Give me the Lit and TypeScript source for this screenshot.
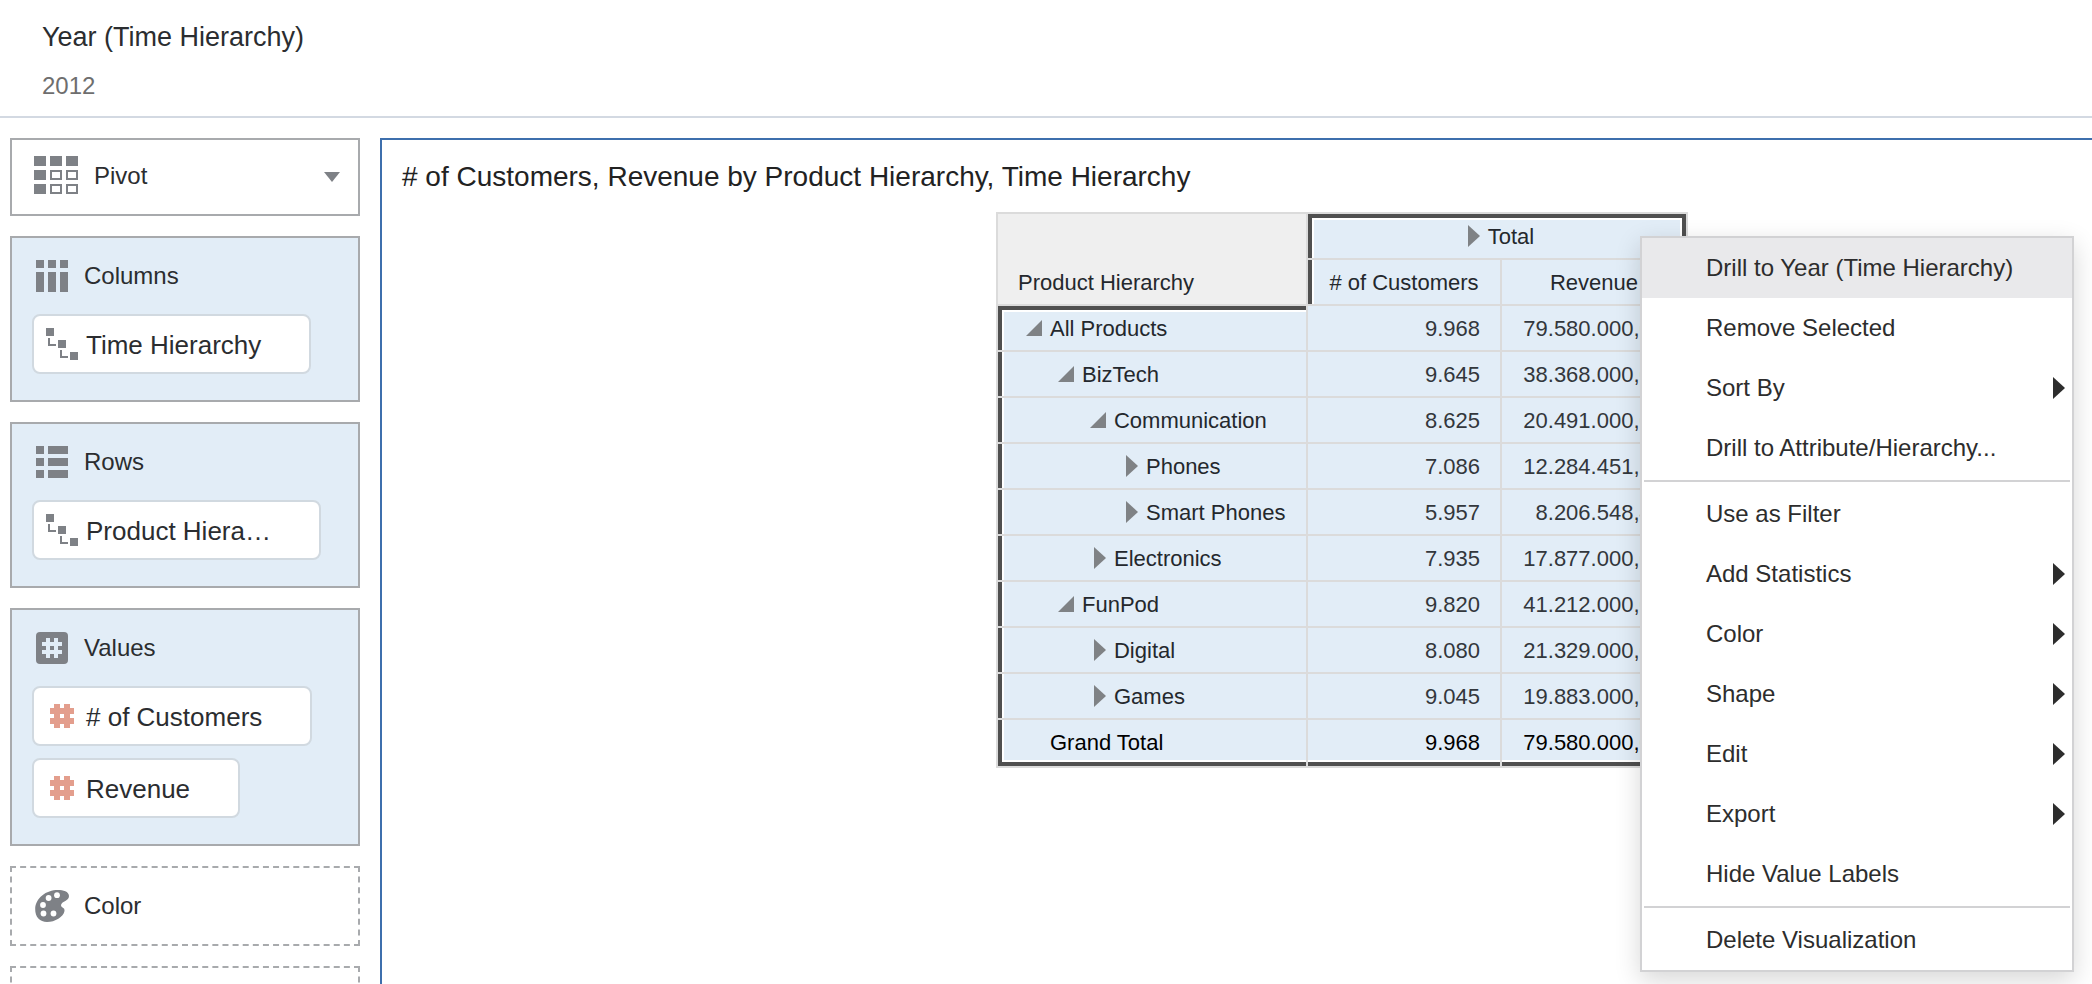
import { LitElement, html, css, svg, nothing } from "lit";
import { customElement, property, state } from "lit/decorators.js";
import { classMap } from "lit/directives/class-map.js";

type IconName = "pivot" | "columns" | "rows" | "values" | "color" | "hierarchy" | "measure";

const icons: Record<IconName, unknown> = {
  pivot: svg`<g fill="currentColor"><path d="M0 0h12v10H0zM16 0h12v10H16zM32 0h12v10H32zM0 14h12v10H0zM0 28h12v10H0z"/></g>
    <g fill="none" stroke="currentColor" stroke-width="2"><path d="M17 15h10v8H17zM33 15h10v8H33zM17 29h10v8H17zM33 29h10v8H33z"/></g>`,
  columns: svg`<path fill="currentColor" d="M0 0h8v8H0zM12 0h8v8h-8zM24 0h8v8h-8zM0 12h8v20H0zM12 12h8v20h-8zM24 12h8v20h-8z"/>`,
  rows: svg`<path fill="currentColor" d="M0 0h8v8H0zM0 12h8v8H0zM0 24h8v8H0zM12 0h20v8H12zM12 12h20v8H12zM12 24h20v8H12z"/>`,
  values: svg`<rect width="32" height="32" rx="4" fill="currentColor"/>
    <path fill="#e2edf7" fill-rule="evenodd" d="M10 6h4v4h4V6h4v4h4v4h-4v4h4v4h-4v4h-4v-4h-4v4h-4v-4H6v-4h4v-4H6v-4h4zM14 14v4h4v-4z"/>`,
  color: svg`<path fill="currentColor" d="M22 0C27 0 33 1.500 33 6C33 11 26 11 25 15C25 18 29 17 28.500 21C27.500 27 19 32 11 32C4 32-1 27-.800 19C-.500 8 10 0 22 0z"/>
    <g fill="#fff"><circle cx="21" cy="5.200" r="2.900"/><circle cx="12.600" cy="8" r="2.900"/><circle cx="7" cy="15" r="2.900"/><circle cx="7.500" cy="23.500" r="2.900"/><circle cx="17.500" cy="23.500" r="2.900"/></g>`,
  hierarchy: svg`<path fill="currentColor" d="M0 0h8v8H0zM12 12h8v8h-8zM24 24h8v8h-8zM2 10h2v6h6v2H2zM14 22h2v6h6v2h-8z"/>`,
  measure: svg`<path fill="#e39e8d" fill-rule="evenodd" d="M8 4h6v4h4V4h6v4h4v6h-4v4h4v6h-4v4h-6v-4h-4v4H8v-4H4v-6h4v-4H4V8h4zM14 14v4h4v-4z"/>`,
};

const icon = (name: IconName) => {
  const [w, h] = name === "pivot" ? [44, 38] : [32, 32];
  return html`<svg class="icon" width=${w} height=${h} viewBox="0 0 ${w} ${h}" aria-hidden="true">${icons[name]}</svg>`;
};

const collapsed = html`<svg class="toggle" width="16" height="22" viewBox="0 0 16 22" aria-hidden="true"><path fill="currentColor" d="M4 0L16 11L4 22z"/></svg>`;
const expanded = html`<svg class="toggle" width="16" height="22" viewBox="0 0 16 22" aria-hidden="true"><path fill="currentColor" d="M16 3V19H0z"/></svg>`;

interface Field {
  label: string;
  icon: IconName;
}

@customElement("drop-target")
class DropTarget extends LitElement {
  @property() label = "";
  @property() icon: IconName = "columns";
  @property({ attribute: false }) fields: Field[] = [];

  static styles = css`
    :host {
      display: block;
    }
    .panel {
      padding: 22px 20px;
      border: 2px dashed #a8aaad;
    }
    .filled {
      padding-bottom: 26px;
      border-style: solid;
      background: #e2edf7;
    }
    .heading {
      display: flex;
      align-items: center;
      gap: 16px;
      height: 32px;
      margin: 0;
      padding-left: 4px;
      font-size: 24px;
      font-weight: 400;
    }
    .icon {
      flex: none;
      overflow: visible;
      color: #7e8186;
    }
    .chips {
      display: flex;
      flex-direction: column;
      align-items: flex-start;
      gap: 12px;
      margin: 22px 0 0;
      padding: 0;
      list-style: none;
    }
    .chip {
      display: flex;
      align-items: center;
      gap: 8px;
      height: 60px;
      padding: 0 48px 0 12px;
      border: 2px solid #d1d9e0;
      border-radius: 8px;
      background: #fff;
      color: inherit;
      font: inherit;
      font-size: 26px;
      white-space: nowrap;
    }
    .chip-label {
      padding-top: 2px;
    }
  `;

  render() {
    const filled = this.fields.length > 0;
    return html`
      <section class=${classMap({ panel: true, filled })}>
        <h2 class="heading">${icon(this.icon)}<span>${this.label}</span></h2>
        ${filled
          ? html`<ul class="chips">
              ${this.fields.map(
                (f) =>
                  html`<li><button class="chip" type="button">${icon(f.icon)}<span class="chip-label">${f.label}</span></button></li>`
              )}
            </ul>`
          : nothing}
      </section>
    `;
  }
}

interface Row {
  label: string;
  level: number;
  state: "open" | "closed" | "total";
  customers: string;
  revenue: string;
}

const rows: Row[] = [
  { label: "All Products", level: 0, state: "open", customers: "9.968", revenue: "79.580.000,00" },
  { label: "BizTech", level: 1, state: "open", customers: "9.645", revenue: "38.368.000,00" },
  { label: "Communication", level: 2, state: "open", customers: "8.625", revenue: "20.491.000,00" },
  { label: "Phones", level: 3, state: "closed", customers: "7.086", revenue: "12.284.451,52" },
  { label: "Smart Phones", level: 3, state: "closed", customers: "5.957", revenue: "8.206.548,48" },
  { label: "Electronics", level: 2, state: "closed", customers: "7.935", revenue: "17.877.000,00" },
  { label: "FunPod", level: 1, state: "open", customers: "9.820", revenue: "41.212.000,00" },
  { label: "Digital", level: 2, state: "closed", customers: "8.080", revenue: "21.329.000,00" },
  { label: "Games", level: 2, state: "closed", customers: "9.045", revenue: "19.883.000,00" },
  { label: "Grand Total", level: 0, state: "total", customers: "9.968", revenue: "79.580.000,00" },
];

@customElement("pivot-table")
class PivotTable extends LitElement {
  static styles = css`
    :host {
      display: block;
    }
    .table {
      table-layout: fixed;
      width: 692px;
      border-spacing: 2px;
      background: #dbdbdb;
      font-size: 22px;
      line-height: 42px;
      color: #24282d;
      --dark: #4f4f4f;
    }
    .product {
      width: 308px;
    }
    .customers {
      width: 192px;
    }
    .revenue {
      width: 184px;
    }
    .table th,
    .table td {
      height: 42px;
      padding: 2px 20px 0;
      background: #e2edf7;
      font-weight: 400;
      white-space: nowrap;
    }
    .table th.corner {
      background: #efefef;
      text-align: left;
      vertical-align: bottom;
    }
    .table th.tree {
      height: 44px;
      padding-top: 0;
    }
    .group {
      box-shadow: inset 4px 4px var(--dark), inset -4px 0 var(--dark), inset 6px 6px #fff, inset -6px 0 #fff;
    }
    .first {
      box-shadow: inset 4px 0 var(--dark), inset 6px 0 #fff;
    }
    .last {
      box-shadow: inset -4px 0 var(--dark), inset -6px 0 #fff;
    }
    .member {
      display: flex;
      align-items: center;
      gap: 8px;
      height: 44px;
      padding-left: calc(8px + var(--level) * 32px);
    }
    .name {
      padding-top: 2px;
    }
    .center {
      justify-content: center;
      padding-left: 4px;
    }
    .toggle {
      flex: none;
      color: #7f8285;
    }
    .spacer {
      width: 16px;
    }
    .number {
      color: #33373c;
      text-align: right;
    }
    .table td.last {
      padding-right: 22px;
    }
    tbody tr:first-child .first {
      box-shadow: inset 4px 4px var(--dark), inset 6px 6px #fff;
    }
    .total,
    .total .number {
      color: #000;
    }
    .table .total th,
    .table .total td {
      padding-bottom: 2px;
      box-shadow: inset 0 -4px var(--dark), inset 0 -6px #fff;
    }
    .table .total .first {
      box-shadow: inset 4px -4px var(--dark), inset 6px -6px #fff;
    }
    .table .total .last {
      box-shadow: inset -4px -4px var(--dark), inset -6px -6px #fff;
    }
  `;

  render() {
    return html`
      <table class="table">
        <colgroup>
          <col class="product" />
          <col class="customers" />
          <col class="revenue" />
        </colgroup>
        <thead>
          <tr>
            <th class="corner" rowspan="2" scope="col">Product Hierarchy</th>
            <th class="group tree" colspan="2" scope="colgroup">
              <span class="member center">${collapsed}<span class="name">Total</span></span>
            </th>
          </tr>
          <tr>
            <th class="first" scope="col"># of Customers</th>
            <th class="last" scope="col">Revenue</th>
          </tr>
        </thead>
        <tbody>
          ${rows.map(
            (r) => html`<tr class=${classMap({ total: r.state === "total" })}>
              <th class="first tree" scope="row">
                <span class="member" style="--level: ${r.level}">
                  ${r.state === "open" ? expanded : r.state === "closed" ? collapsed : html`<span class="spacer"></span>`}
                  <span class="name">${r.label}</span>
                </span>
              </th>
              <td class="number">${r.customers}</td>
              <td class="number last">${r.revenue}</td>
            </tr>`
          )}
        </tbody>
      </table>
    `;
  }
}

interface MenuItem {
  label: string;
  submenu?: boolean;
}

const menuGroups: MenuItem[][] = [
  [
    { label: "Drill to Year (Time Hierarchy)" },
    { label: "Remove Selected" },
    { label: "Sort By", submenu: true },
    { label: "Drill to Attribute/Hierarchy..." },
  ],
  [
    { label: "Use as Filter" },
    { label: "Add Statistics", submenu: true },
    { label: "Color", submenu: true },
    { label: "Shape", submenu: true },
    { label: "Edit", submenu: true },
    { label: "Export", submenu: true },
    { label: "Hide Value Labels" },
  ],
  [{ label: "Delete Visualization" }],
];

@customElement("context-menu")
class ContextMenu extends LitElement {
  @state() private active = "Drill to Year (Time Hierarchy)";

  static styles = css`
    :host {
      display: block;
    }
    .menu {
      border: 2px solid #d2d2d4;
      background: #fff;
      box-shadow: 0 8px 24px rgba(0, 0, 0, 0.16);
    }
    .item {
      display: flex;
      align-items: center;
      justify-content: space-between;
      width: 100%;
      height: 60px;
      padding: 0 7px 0 64px;
      border: 0;
      background: none;
      color: #2d2d2d;
      font: inherit;
      font-size: 24px;
      text-align: left;
      white-space: nowrap;
    }
    .active {
      background: #e9e9eb;
    }
    .divider {
      height: 2px;
      margin: 2px;
      border: 0;
      background: #d2d2d4;
    }
    .toggle {
      flex: none;
    }
  `;

  render() {
    return html`
      <div class="menu" role="menu">
        ${menuGroups.map(
          (group, i) => html`
            ${i ? html`<hr class="divider" />` : nothing}
            ${group.map(
              (item) => html`<button
                class=${classMap({ item: true, active: item.label === this.active })}
                type="button"
                role="menuitem"
                @mouseenter=${() => (this.active = item.label)}
              >
                <span>${item.label}</span>${item.submenu ? collapsed : nothing}
              </button>`
            )}
          `
        )}
      </div>
    `;
  }
}

@customElement("app-root")
class AppRoot extends LitElement {
  static styles = css`
    :host {
      display: flex;
      flex-direction: column;
      gap: 20px;
      height: 100vh;
      overflow: hidden;
      background: #fff;
      color: #2b2d30;
      font-family: "Liberation Sans", Arial, sans-serif;
    }
    .filter {
      padding: 20px 42px 14px;
      border-bottom: 2px solid #d3d9e2;
    }
    .filter-name {
      margin: 0;
      font-size: 27px;
      font-weight: 400;
      line-height: 34px;
    }
    .filter-value {
      margin: 16px 0 0;
      color: #6e6e6e;
      font-size: 24px;
      line-height: 32px;
    }
    .workspace {
      display: flex;
      flex: 1;
      gap: 20px;
      min-height: 0;
      padding-left: 10px;
    }
    .grammar {
      display: flex;
      flex: none;
      flex-direction: column;
      gap: 20px;
      width: 350px;
    }
    .chart-type {
      display: grid;
      grid-template-columns: auto 1fr auto;
      align-items: center;
      color: #7e8186;
    }
    .chart-type .icon {
      grid-area: 1 / 1;
      margin: 0 0 4px 24px;
      pointer-events: none;
    }
    .caret {
      grid-area: 1 / 3;
      margin-right: 20px;
      pointer-events: none;
    }
    .select {
      grid-area: 1 / 1 / 2 / 4;
      width: 100%;
      height: 78px;
      padding: 0 40px 4px 82px;
      border: 2px solid #a8aaad;
      border-radius: 0;
      appearance: none;
      background: #fff;
      color: #2b2d30;
      font: inherit;
      font-size: 24px;
    }
    /* The canvas runs on past the right edge of the window. */
    .canvas {
      display: flex;
      flex: 1;
      flex-direction: column;
      align-items: center;
      margin-right: -212px;
      border: 2px solid #3e6fad;
      border-bottom: 0;
    }
    .chart-title {
      align-self: stretch;
      margin: 0;
      padding: 20px 20px 18px;
      color: #222;
      font-size: 28px;
      font-weight: 400;
      line-height: 34px;
    }
    .chart {
      position: relative;
    }
    .popup {
      position: absolute;
      top: 24px;
      left: 644px;
      width: 434px;
    }
  `;

  render() {
    return html`
      <header class="filter">
        <h1 class="filter-name">Year (Time Hierarchy)</h1>
        <p class="filter-value">2012</p>
      </header>
      <div class="workspace">
        <aside class="grammar">
          <div class="chart-type">
            <select class="select" aria-label="Visualization type">
              <option>Pivot</option>
            </select>
            ${icon("pivot")}
            <svg class="caret" width="16" height="10" viewBox="0 0 16 10" aria-hidden="true"><path fill="currentColor" d="M0 0H16L8 10z" /></svg>
          </div>
          <drop-target label="Columns" icon="columns" .fields=${[{ label: "Time Hierarchy", icon: "hierarchy" }]}></drop-target>
          <drop-target label="Rows" icon="rows" .fields=${[{ label: "Product Hiera…", icon: "hierarchy" }]}></drop-target>
          <drop-target
            label="Values"
            icon="values"
            .fields=${[
              { label: "# of Customers", icon: "measure" },
              { label: "Revenue", icon: "measure" },
            ]}
          ></drop-target>
          <drop-target label="Color" icon="color"></drop-target>
          <drop-target icon="rows"></drop-target>
        </aside>
        <main class="canvas">
          <h2 class="chart-title"># of Customers, Revenue by Product Hierarchy, Time Hierarchy</h2>
          <div class="chart">
            <pivot-table></pivot-table>
            <context-menu class="popup"></context-menu>
          </div>
        </main>
      </div>
    `;
  }
}
